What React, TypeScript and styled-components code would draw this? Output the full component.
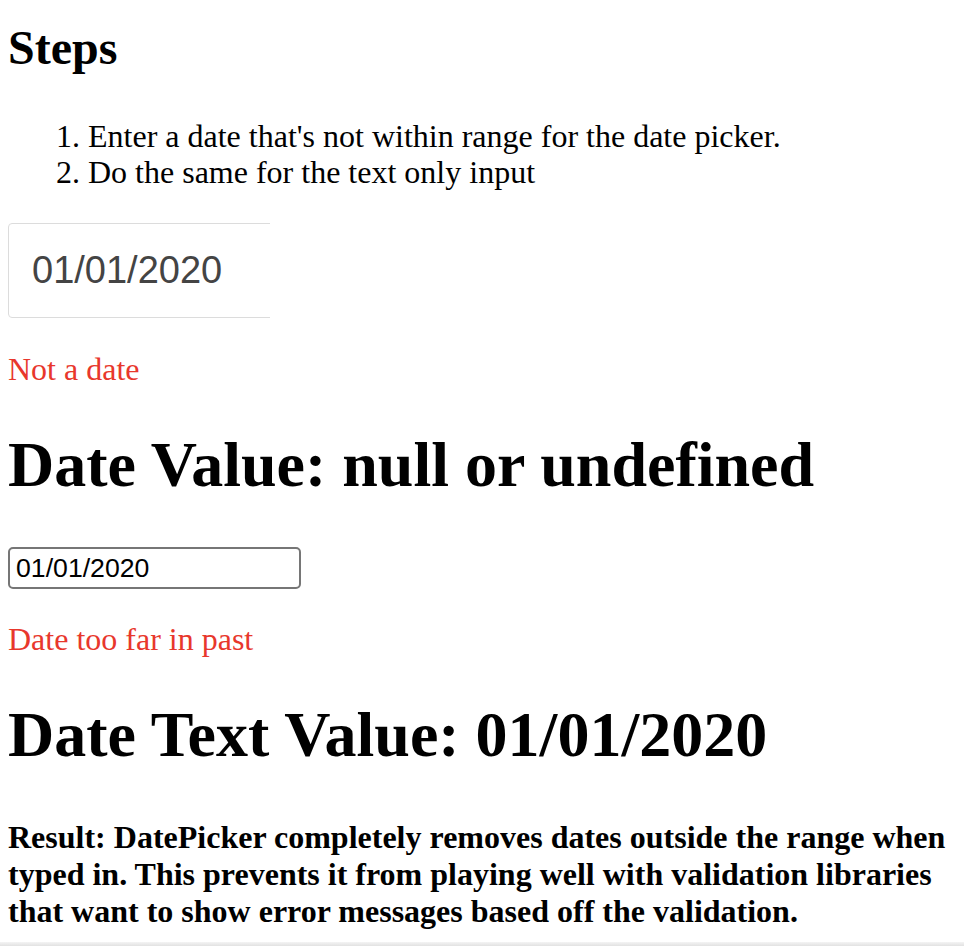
import styled, { createGlobalStyle } from "styled-components";

const GlobalStyle = createGlobalStyle`
  html, body {
    margin: 0;
    padding: 0;
    background: #ffffff;
    color: #000000;
    font-family: "Liberation Serif", "Times New Roman", serif;
  }
`;

const Page = styled.div`
  padding: 20px 8px 0;
  display: flex;
  flex-direction: column;
  align-items: flex-start;
`;

const StepsTitle = styled.h2`
  margin: 0;
  font-size: 48px;
  line-height: 56px;
  font-weight: 700;
`;

const StepList = styled.ol`
  margin: 42px 0 0;
  padding-left: 80px;
  font-size: 32px;
  line-height: 36px;
`;

const PickerWrap = styled.div`
  margin-top: 33px;
  width: 262px;
  overflow: hidden;
`;

const PickerInput = styled.input`
  box-sizing: border-box;
  display: block;
  width: 320px;
  height: 95px;
  padding: 0 0 0 23px;
  border: 1px solid #dcdcdc;
  border-radius: 4px;
  font-family: "Liberation Sans", Arial, sans-serif;
  font-size: 38px;
  color: #444444;
  background: #ffffff;
  outline: none;
`;

const ErrorText = styled.div<{ $gap: number }>`
  margin-top: ${p => p.$gap}px;
  font-size: 32px;
  line-height: 36px;
  color: #e8372c;
`;

const ValueTitle = styled.h1`
  margin: 41px 0 0;
  font-size: 64px;
  line-height: 74px;
  font-weight: 700;
`;

const TextInput = styled.input`
  box-sizing: border-box;
  display: block;
  margin-top: 45px;
  width: 293px;
  height: 42px;
  padding: 0 6px;
  border: 2px solid #767676;
  border-radius: 5px;
  font-family: "Liberation Sans", Arial, sans-serif;
  font-size: 26.67px;
  color: #000000;
  background: #ffffff;
  outline: none;
`;

const ResultText = styled.h4`
  margin: 47px 0 0;
  font-size: 32px;
  line-height: 37px;
  font-weight: 700;
`;

const BottomEdge = styled.div`
  position: fixed;
  left: 0;
  right: 0;
  bottom: 0;
  height: 4px;
  background: linear-gradient(to bottom, #f4f4f4, #e2e2e2);
`;

const App = () => {
  return (
    <>
      <GlobalStyle />
      <Page>
        <StepsTitle>Steps</StepsTitle>
        <StepList>
          <li>Enter a date that's not within range for the date picker.</li>
          <li>Do the same for the text only input</li>
        </StepList>
        <PickerWrap>
          <PickerInput defaultValue="01/01/2020" />
        </PickerWrap>
        <ErrorText $gap={33}>Not a date</ErrorText>
        <ValueTitle>Date Value: null or undefined</ValueTitle>
        <TextInput defaultValue="01/01/2020" />
        <ErrorText $gap={32}>Date too far in past</ErrorText>
        <ValueTitle>Date Text Value: 01/01/2020</ValueTitle>
        <ResultText>
          Result: DatePicker completely removes dates outside the range when
          typed in. This prevents it from playing well with validation
          libraries that want to show error messages based off the validation.
        </ResultText>
      </Page>
      <BottomEdge />
    </>
  );
};

export default App;
